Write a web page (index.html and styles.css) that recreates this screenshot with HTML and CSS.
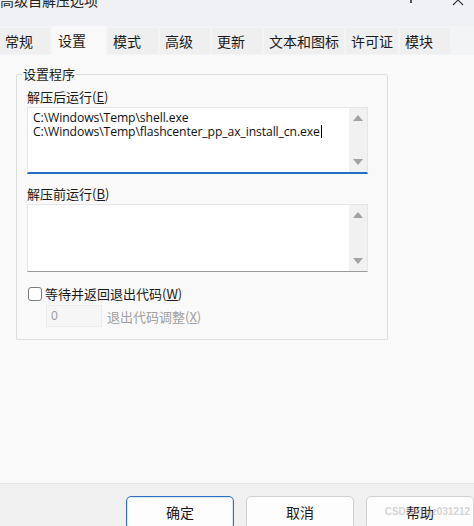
FILE: index.html
```html
<!DOCTYPE html>
<html lang="zh-CN">

<head>
  <meta charset="UTF-8">
  <title>高级自解压选项</title>
  <meta name="viewport" content="width=device-width,initial-scale=1.0">
  <link rel="stylesheet" href="styles.css">
</head>

<body>

  <div class="window">
    <div class="titlebar">
      <span class="title">高级自解压选项</span>
      <span class="controls">
        <span class="min"></span>
        <svg class="close" width="12" height="12" viewBox="0 0 12 12">
          <path d="M1 1 L11 11 M11 1 L1 11" stroke="#333" stroke-width="1.1" fill="none" />
        </svg>
      </span>
    </div>

    <div class="tabs">
      <div class="tab">常规</div>
      <div class="tab active">设置</div>
      <div class="tab">模式</div>
      <div class="tab">高级</div>
      <div class="tab">更新</div>
      <div class="tab">文本和图标</div>
      <div class="tab">许可证</div>
      <div class="tab">模块</div>
    </div>

    <div class="panel">
      <fieldset class="group">
        <legend>设置程序</legend>

        <div class="field-label">解压后运行(<u>E</u>)</div>
        <div class="editbox focused">
          <div class="edit-text">C:\Windows\Temp\shell.exe<br>C:\Windows\Temp\flashcenter_pp_ax_install_cn.exe<span class="caret"></span></div>
          <div class="vscroll"><span class="arrow up"></span><span class="arrow down"></span></div>
        </div>

        <div class="field-label second">解压前运行(<u>B</u>)</div>
        <div class="editbox">
          <div class="edit-text"></div>
          <div class="vscroll"><span class="arrow up"></span><span class="arrow down"></span></div>
        </div>

        <div class="check-row">
          <span class="checkbox"></span>
          <span>等待并返回退出代码(<u>W</u>)</span>
        </div>

        <div class="code-row">
          <div class="numbox">0</div>
          <span class="disabled-label">退出代码调整(<u>X</u>)</span>
        </div>
      </fieldset>
    </div>

    <div class="footer">
      <button class="btn default">确定</button>
      <button class="btn">取消</button>
      <button class="btn">帮助</button>
      <span class="watermark">CSDN @qz031212</span>
    </div>
  </div>

</body>

</html>
```

FILE: styles.css
```css
html,
body {
  margin: 0;
  width: 100%;
  height: 100%;
  overflow: hidden;
}

body {
  font-family: "Noto Sans", "Noto Sans CJK SC", sans-serif;
  font-size: 13px;
  color: #1a1a1a;
}

.window {
  width: 474px;
  height: 526px;
  display: flex;
  flex-direction: column;
  background-color: #f9f9f9;
}

.titlebar {
  height: 26px;
  flex: none;
  display: flex;
  justify-content: space-between;
  background-color: #eff1f5;
  overflow: hidden;
}

.title {
  font-family: "Noto Sans CJK SC", sans-serif;
  font-size: 14px;
  line-height: 14px;
  margin-top: -7px;
  color: #222;
}

.controls {
  display: flex;
  align-items: flex-start;
  gap: 40px;
  margin-right: 10px;
}

.controls .min {
  width: 2px;
  height: 3px;
  background-color: #555;
}

.controls .close {
  margin-top: -6px;
}

.tabs {
  height: 29px;
  flex: none;
  display: flex;
  align-items: flex-start;
  gap: 2px;
  background-color: #f3f4f6;
  font-family: "Noto Sans CJK SC", sans-serif;
  font-size: 14px;
}

.tab {
  box-sizing: border-box;
  height: 26px;
  line-height: 26px;
  margin-top: 2px;
  min-width: 50px;
  padding: 0 5px;
  white-space: nowrap;
  background-color: #efefef;
  color: #1a1a1a;
}

.tab.active {
  height: 29px;
  margin-top: 0;
  line-height: 29px;
  min-width: 54px;
  padding-left: 6px;
  background-color: #f9f9f9;
}

.panel {
  flex: 1;
  padding: 12px 0 0 16px;
}

.group {
  box-sizing: border-box;
  width: 372px;
  margin: 0;
  padding: 0 10px 12px 10px;
  border: 1px solid #dedede;
  border-radius: 2px;
  font-family: "Noto Sans CJK SC", sans-serif;
}

.group legend {
  padding: 0 1px;
  margin-left: -5px;
  font-size: 13px;
  line-height: 14px;
}

.field-label {
  line-height: 17px;
  margin-top: 7px;
  margin-bottom: 2px;
}

.field-label.second {
  margin-top: 11px;
}

.editbox {
  box-sizing: border-box;
  display: flex;
  width: 341px;
  height: 68px;
  background-color: #fff;
  border: 1px solid #e6e6e6;
  border-bottom: 1px solid #9a9a9a;
}

.editbox.focused {
  height: 67px;
  border-bottom: 2px solid #1f6fc5;
}

.edit-text {
  flex: 1;
  padding: 4px 5px;
  font-family: "Open Sans", "Noto Sans", sans-serif;
  font-size: 12.2px;
  line-height: 12.5px;
  letter-spacing: -0.1px;
  color: #111;
}

.caret {
  display: inline-block;
  width: 1px;
  height: 13px;
  margin-left: 1px;
  vertical-align: -2px;
  background-color: #000;
}

.vscroll {
  width: 18px;
  display: flex;
  flex-direction: column;
  justify-content: space-between;
  align-items: center;
  padding: 7px 0 7px 0;
  background-color: #f1f1f1;
}

.arrow {
  width: 0;
  height: 0;
  border-left: 5px solid transparent;
  border-right: 5px solid transparent;
}

.arrow.up {
  border-bottom: 6px solid #a2a2a2;
}

.arrow.down {
  border-top: 6px solid #a2a2a2;
}

.check-row {
  display: flex;
  align-items: center;
  gap: 3px;
  margin-top: 13px;
  line-height: 17px;
  padding-left: 1px;
}

.checkbox {
  width: 12px;
  height: 12px;
  border: 1px solid #7c7c7c;
  border-radius: 3px;
  background-color: #fff;
}

.code-row {
  display: flex;
  align-items: center;
  gap: 5px;
  margin-top: 3px;
  padding-left: 19px;
}

.numbox {
  width: 50px;
  height: 20px;
  line-height: 20px;
  padding-left: 4px;
  border: 1px solid #ececec;
  background-color: #f6f6f6;
  color: #9a9a9a;
  font-family: "Open Sans", "Noto Sans", sans-serif;
  font-size: 12px;
}

.disabled-label {
  color: #a0a0a0;
}

.footer {
  position: relative;
  height: 43px;
  flex: none;
  display: flex;
  justify-content: flex-end;
  align-items: flex-start;
  gap: 12px;
  padding-top: 12px;
  box-sizing: border-box;
  background-color: #f0f0f0;
  border-top: 1px solid #e4e4e4;
  overflow: hidden;
}

.btn {
  width: 108px;
  height: 34px;
  flex: none;
  padding: 0 0 2px 0;
  border: 1px solid #d2d2d2;
  border-radius: 5px;
  background-color: #fdfdfd;
  font-family: "Noto Sans CJK SC", sans-serif;
  font-size: 14px;
  color: #1a1a1a;
}

.btn.default {
  border: 1px solid #2a6fc0;
  box-shadow: inset 0 0 0 1px #d8e6f6;
}

.watermark {
  position: absolute;
  right: 4px;
  top: 22px;
  font-family: "Liberation Sans", sans-serif;
  font-size: 10px;
  font-weight: bold;
  color: rgba(160, 160, 160, 0.45);
}
```
